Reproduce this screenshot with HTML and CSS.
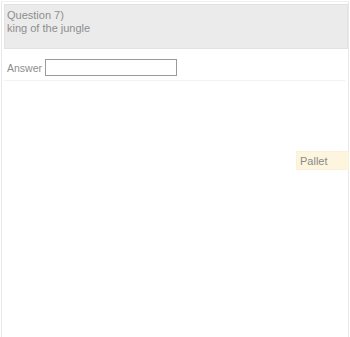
FILE: index.html
```html
<!DOCTYPE html>
<html>
<head>
<meta charset="utf-8">
<link rel="stylesheet" href="styles.css">
</head>
<body>
<div class="frame">
  <div class="question">
    <div>Question 7)</div>
    <div>king of the jungle</div>
  </div>
  <div class="answer-row">
    <label class="answer-label">Answer</label>
    <input class="answer-input" type="text">
  </div>
  <div class="canvas">
    <div class="pallet">Pallet</div>
  </div>
</div>
</body>
</html>
```
FILE: styles.css
```css
html, body {
  margin: 0;
  padding: 0;
  background: #ffffff;
}
body {
  font-family: "Liberation Sans", Arial, sans-serif;
  font-size: 11px;
  color: #8e8e8e;
}
.frame {
  margin: 1px 1px 0 1px;
  height: 336px;
  border-left: 1px solid #e8e8e8;
  border-right: 1px solid #e8e8e8;
  border-top: 1px solid #f0f0f0;
  box-sizing: border-box;
  padding: 2px 0 0 2px;
}
.question {
  background: #ebebeb;
  border: 1px solid #e2e2e2;
  height: 45px;
  box-sizing: border-box;
  padding: 4px 2px;
  line-height: 13px;
  font-size: 11px;
}
.answer-row {
  display: flex;
  align-items: center;
  gap: 3px;
  padding: 10px 0 4px 3px;
  height: 17px;
  border-bottom: 1px solid #f2f2f2;
  margin-right: 3px;
}
.answer-label {
  font-size: 10.5px;
}
.answer-input {
  width: 132px;
  height: 17px;
  box-sizing: border-box;
  border: 1px solid #9a9a9a;
  padding: 0;
  margin: 0;
}
.canvas {
  position: relative;
  height: 250px;
}
.pallet {
  position: absolute;
  right: -1px;
  top: 70px;
  width: 53px;
  height: 19px;
  box-sizing: border-box;
  background: #fdf5de;
  border: 1px solid #fbf1d8;
  padding: 3px 3px;
  font-size: 11px;
  color: #8a8a8a;
}
```
